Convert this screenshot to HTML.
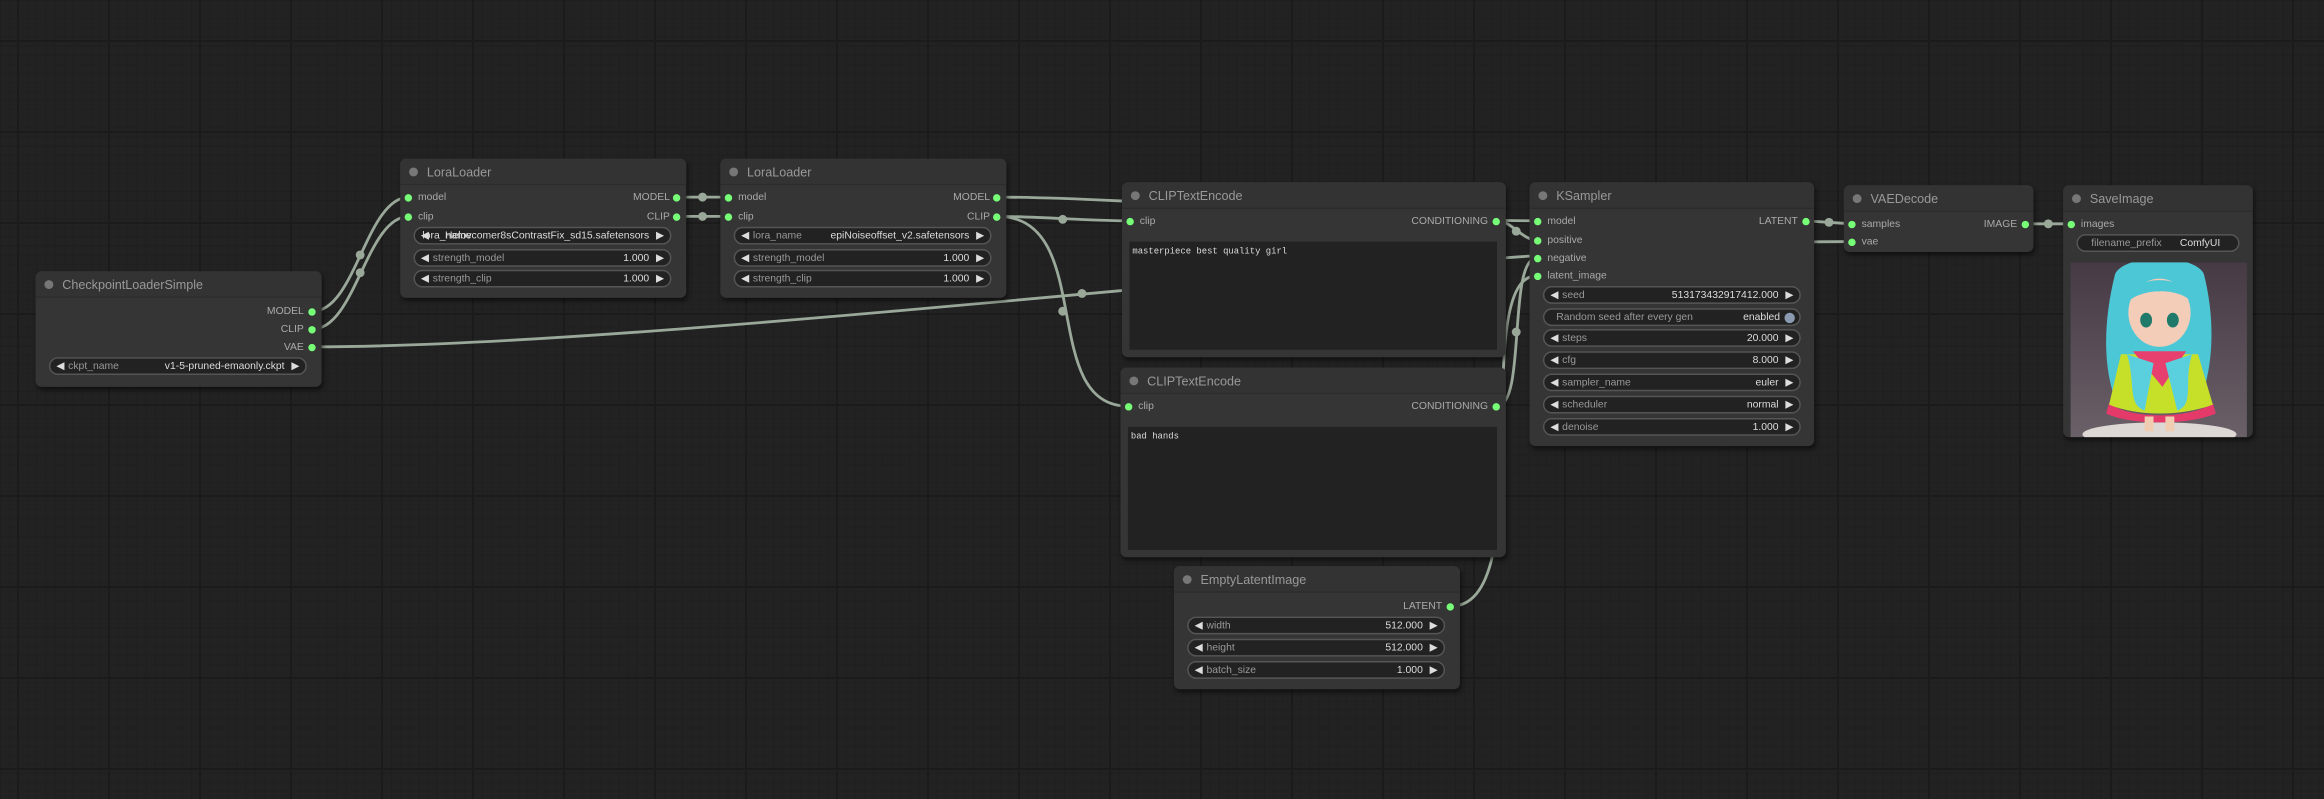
<!DOCTYPE html>
<html><head><meta charset="utf-8"><style>
html,body{margin:0;padding:0;}
body{width:2324px;height:799px;overflow:hidden;position:relative;
background-color:#222;
background-image:
linear-gradient(to right,#1b1b1b 2px,transparent 2px),
linear-gradient(to bottom,#1b1b1b 2px,transparent 2px),
linear-gradient(to right,#1f1f1f 1px,transparent 1px),
linear-gradient(to bottom,#1f1f1f 1px,transparent 1px);
background-size:91px 91px,91px 91px,9.1px 9.1px,9.1px 9.1px;
background-position:17px 40px,17px 40px,0 0,0 0;
font-family:"Liberation Sans",sans-serif;}
#c{position:absolute;left:0;top:0;width:1568px;height:539px;transform:scale(1.48214);transform-origin:0 0;}
.n{position:absolute;background:#353535;border-radius:4px;box-shadow:1px 2px 3px rgba(0,0,0,.5);}
.t{position:absolute;left:0;right:0;top:0;height:17px;background:#333;border-bottom:1px solid #2c2c2c;border-radius:4px 4px 0 0;color:#999;font-size:8.5px;line-height:18px;padding-left:18px;}
.t:before{content:"";position:absolute;left:6px;top:6px;width:6px;height:6px;border-radius:50%;background:#777;}
.l{position:absolute;font-size:7px;color:#aaa;line-height:12px;white-space:nowrap;}
.dot{position:absolute;width:5px;height:5px;border-radius:50%;background:#7f7;}
.w{position:absolute;border:1px solid #555;border-radius:7px;background:#222;font-size:7px;line-height:11px;color:#999;box-sizing:border-box;height:12px;}
.w .a{position:absolute;left:4px;top:0;color:#ddd;font-size:7px;}
.w .b{position:absolute;right:4px;top:0;color:#ddd;font-size:7px;}
.w .k{position:absolute;left:12px;top:0;}
.w .v{position:absolute;right:14px;top:0;color:#ddd;}
.ta{position:absolute;background:#222;color:#ddd;font-family:"Liberation Mono",monospace;font-size:6px;padding:3px 2px;box-sizing:border-box;}
</style></head><body>
<div id="c">
<svg width="1568" height="539" style="position:absolute;left:0;top:0" fill="none" stroke="#9aa89a" stroke-width="1.9">
<path d="M211 210 C240 210 247 133 276 133"/>
<path d="M211 222 C240 222 247 146 276 146"/>
<path d="M211 234 C470 234 990 163 1249 163"/>
<path d="M457 133 L492 133"/>
<path d="M457 146 L492 146"/>
<path d="M673 133 C760 133 950 149 1037 149"/>
<path d="M673 146 C700 146 735 149 762 149"/>
<path d="M673 146 C740 146 700 274 761 274"/>
<path d="M1010 149 C1020 149 1027 162 1037 162"/>
<path d="M1010 274 C1030 274 1017 174 1037 174"/>
<path d="M979 409 C1040 409 990 186 1037 186"/>
<path d="M1218 149 L1249 151"/>
<path d="M1366 151 L1398 151"/>
<g fill="#9aa89a" stroke="none">
<circle cx="243" cy="172" r="3"/><circle cx="243" cy="184" r="3"/>
<circle cx="474" cy="133" r="3"/><circle cx="474" cy="146" r="3"/>
<circle cx="717" cy="148" r="3"/><circle cx="717" cy="210" r="3"/>
<circle cx="730" cy="198" r="3"/><circle cx="1023" cy="156" r="3"/>
<circle cx="1023" cy="224" r="3"/><circle cx="1234" cy="150" r="3"/><circle cx="1382" cy="151" r="3"/>
</g></svg>

<div class="n" style="left:24px;top:183px;width:193px;height:78px"><div class="t">CheckpointLoaderSimple</div></div>
<div class="l" style="left:150px;top:205px;width:55px;text-align:right">MODEL</div><div class="dot" style="left:208px;top:207.5px"></div>
<div class="l" style="left:150px;top:217px;width:55px;text-align:right">CLIP</div><div class="dot" style="left:208px;top:219.5px"></div>
<div class="l" style="left:150px;top:229px;width:55px;text-align:right">VAE</div><div class="dot" style="left:208px;top:231.5px"></div>
<div class="w" style="left:33px;top:241px;width:174px"><span class="a">◀</span><span class="k">ckpt_name</span><span class="v">v1-5-pruned-emaonly.ckpt</span><span class="b">▶</span></div>

<div class="n" style="left:270px;top:107px;width:193px;height:94px"><div class="t">LoraLoader</div></div>
<div class="dot" style="left:273px;top:130.5px"></div><div class="l" style="left:282px;top:128px">model</div>
<div class="dot" style="left:273px;top:143.5px"></div><div class="l" style="left:282px;top:141px">clip</div>
<div class="l" style="left:390px;top:128px;width:62px;text-align:right">MODEL</div><div class="dot" style="left:454px;top:130.5px"></div>
<div class="l" style="left:390px;top:141px;width:62px;text-align:right">CLIP</div><div class="dot" style="left:454px;top:143.5px"></div>
<div class="w" style="left:279px;top:153px;width:174px"><span class="a">◀</span><span class="k" style="left:5px;color:#ddd">lora_name</span><span class="v" style="color:#ddd">Helovcomer8sContrastFix_sd15.safetensors</span><span class="b">▶</span></div>
<div class="w" style="left:279px;top:168px;width:174px"><span class="a">◀</span><span class="k">strength_model</span><span class="v">1.000</span><span class="b">▶</span></div>
<div class="w" style="left:279px;top:182px;width:174px"><span class="a">◀</span><span class="k">strength_clip</span><span class="v">1.000</span><span class="b">▶</span></div>

<div class="n" style="left:486px;top:107px;width:193px;height:94px"><div class="t">LoraLoader</div></div>
<div class="dot" style="left:489px;top:130.5px"></div><div class="l" style="left:498px;top:128px">model</div>
<div class="dot" style="left:489px;top:143.5px"></div><div class="l" style="left:498px;top:141px">clip</div>
<div class="l" style="left:606px;top:128px;width:62px;text-align:right">MODEL</div><div class="dot" style="left:670px;top:130.5px"></div>
<div class="l" style="left:606px;top:141px;width:62px;text-align:right">CLIP</div><div class="dot" style="left:670px;top:143.5px"></div>
<div class="w" style="left:495px;top:153px;width:174px"><span class="a">◀</span><span class="k">lora_name</span><span class="v">epiNoiseoffset_v2.safetensors</span><span class="b">▶</span></div>
<div class="w" style="left:495px;top:168px;width:174px"><span class="a">◀</span><span class="k">strength_model</span><span class="v">1.000</span><span class="b">▶</span></div>
<div class="w" style="left:495px;top:182px;width:174px"><span class="a">◀</span><span class="k">strength_clip</span><span class="v">1.000</span><span class="b">▶</span></div>

<div class="n" style="left:757px;top:123px;width:259px;height:118px"><div class="t">CLIPTextEncode</div></div>
<div class="dot" style="left:760px;top:146.5px"></div><div class="l" style="left:769px;top:144px">clip</div>
<div class="l" style="left:900px;top:144px;width:104px;text-align:right">CONDITIONING</div><div class="dot" style="left:1007px;top:146.5px"></div>
<div class="ta" style="left:762px;top:163px;width:248px;height:73px">masterpiece best quality girl</div>

<div class="n" style="left:756px;top:248px;width:260px;height:128px"><div class="t">CLIPTextEncode</div></div>
<div class="dot" style="left:759px;top:271.5px"></div><div class="l" style="left:768px;top:269px">clip</div>
<div class="l" style="left:900px;top:269px;width:104px;text-align:right">CONDITIONING</div><div class="dot" style="left:1007px;top:271.5px"></div>
<div class="ta" style="left:761px;top:288px;width:249px;height:83px">bad hands</div>

<div class="n" style="left:1032px;top:123px;width:192px;height:178px"><div class="t">KSampler</div></div>
<div class="dot" style="left:1035px;top:146.5px"></div><div class="l" style="left:1044px;top:144px">model</div>
<div class="dot" style="left:1035px;top:159.5px"></div><div class="l" style="left:1044px;top:157px">positive</div>
<div class="dot" style="left:1035px;top:171.5px"></div><div class="l" style="left:1044px;top:169px">negative</div>
<div class="dot" style="left:1035px;top:183.5px"></div><div class="l" style="left:1044px;top:181px">latent_image</div>
<div class="l" style="left:1150px;top:144px;width:63px;text-align:right">LATENT</div><div class="dot" style="left:1216px;top:146.5px"></div>
<div class="w" style="left:1041px;top:193px;width:174px"><span class="a">◀</span><span class="k">seed</span><span class="v">513173432917412.000</span><span class="b">▶</span></div>
<div class="w" style="left:1041px;top:208px;width:174px"><span class="k" style="left:8px">Random seed after every gen</span><span class="v" style="right:13px">enabled</span><span style="position:absolute;right:3px;top:2px;width:7px;height:7px;border-radius:50%;background:#8a9ab0"></span></div>
<div class="w" style="left:1041px;top:222px;width:174px"><span class="a">◀</span><span class="k">steps</span><span class="v">20.000</span><span class="b">▶</span></div>
<div class="w" style="left:1041px;top:237px;width:174px"><span class="a">◀</span><span class="k">cfg</span><span class="v">8.000</span><span class="b">▶</span></div>
<div class="w" style="left:1041px;top:252px;width:174px"><span class="a">◀</span><span class="k">sampler_name</span><span class="v">euler</span><span class="b">▶</span></div>
<div class="w" style="left:1041px;top:267px;width:174px"><span class="a">◀</span><span class="k">scheduler</span><span class="v">normal</span><span class="b">▶</span></div>
<div class="w" style="left:1041px;top:282px;width:174px"><span class="a">◀</span><span class="k">denoise</span><span class="v">1.000</span><span class="b">▶</span></div>

<div class="n" style="left:1244px;top:125px;width:128px;height:45px"><div class="t">VAEDecode</div></div>
<div class="dot" style="left:1247px;top:148.5px"></div><div class="l" style="left:1256px;top:146px">samples</div>
<div class="dot" style="left:1247px;top:160.5px"></div><div class="l" style="left:1256px;top:158px">vae</div>
<div class="l" style="left:1300px;top:146px;width:61px;text-align:right">IMAGE</div><div class="dot" style="left:1364px;top:148.5px"></div>

<div class="n" style="left:1392px;top:125px;width:128px;height:170px;overflow:hidden"><div class="t">SaveImage</div>
<svg style="position:absolute;left:5px;top:52px" width="119" height="118" viewBox="0 0 119 118">
<defs><linearGradient id="bg" x1="0" y1="0" x2="0" y2="1"><stop offset="0" stop-color="#463a44"/><stop offset="1" stop-color="#6a6068"/></linearGradient></defs>
<rect width="119" height="118" fill="url(#bg)"/>
<ellipse cx="60" cy="116" rx="52" ry="8" fill="#ddd8d4"/>
<path d="M30 8 C36 -6 84 -6 90 8 C98 40 96 70 88 92 L30 92 C22 70 22 40 30 8Z" fill="#4cc7d6"/>
<path d="M26 95 C40 106 80 106 96 95 L98 102 C80 110 40 110 24 102Z" fill="#e33a6a"/>
<path d="M34 62 L86 62 L96 96 C75 104 45 104 26 96Z" fill="#c6e02a"/>
<path d="M42 60 L78 60 L62 84Z" fill="#e8406e"/>
<path d="M38 62 C44 80 38 96 50 100 L56 68Z M82 62 C76 80 84 96 72 100 L64 68Z" fill="#5ad0de"/>
<ellipse cx="60" cy="34" rx="21" ry="23" fill="#f3cdb8"/>
<path d="M36 30 C36 6 84 6 84 30 C78 16 44 16 36 30Z" fill="#4cc7d6"/>
<ellipse cx="51" cy="39" rx="4" ry="5" fill="#1f7a6a"/><ellipse cx="69" cy="39" rx="4" ry="5" fill="#1f7a6a"/>
<rect x="50" y="104" width="6" height="10" fill="#f0cdb0"/><rect x="64" y="104" width="6" height="10" fill="#f0cdb0"/>
</svg>
</div>
<div class="dot" style="left:1395px;top:148.5px"></div><div class="l" style="left:1404px;top:146px">images</div>
<div class="w" style="left:1401px;top:158px;width:110px"><span class="k" style="left:9px">filename_prefix</span><span class="v" style="right:12px">ComfyUI</span></div>

<div class="n" style="left:792px;top:382px;width:193px;height:83px"><div class="t">EmptyLatentImage</div></div>
<div class="l" style="left:900px;top:404px;width:73px;text-align:right">LATENT</div><div class="dot" style="left:976px;top:406.5px"></div>
<div class="w" style="left:801px;top:416px;width:174px"><span class="a">◀</span><span class="k">width</span><span class="v">512.000</span><span class="b">▶</span></div>
<div class="w" style="left:801px;top:431px;width:174px"><span class="a">◀</span><span class="k">height</span><span class="v">512.000</span><span class="b">▶</span></div>
<div class="w" style="left:801px;top:446px;width:174px"><span class="a">◀</span><span class="k">batch_size</span><span class="v">1.000</span><span class="b">▶</span></div>
</div>
</body></html>
